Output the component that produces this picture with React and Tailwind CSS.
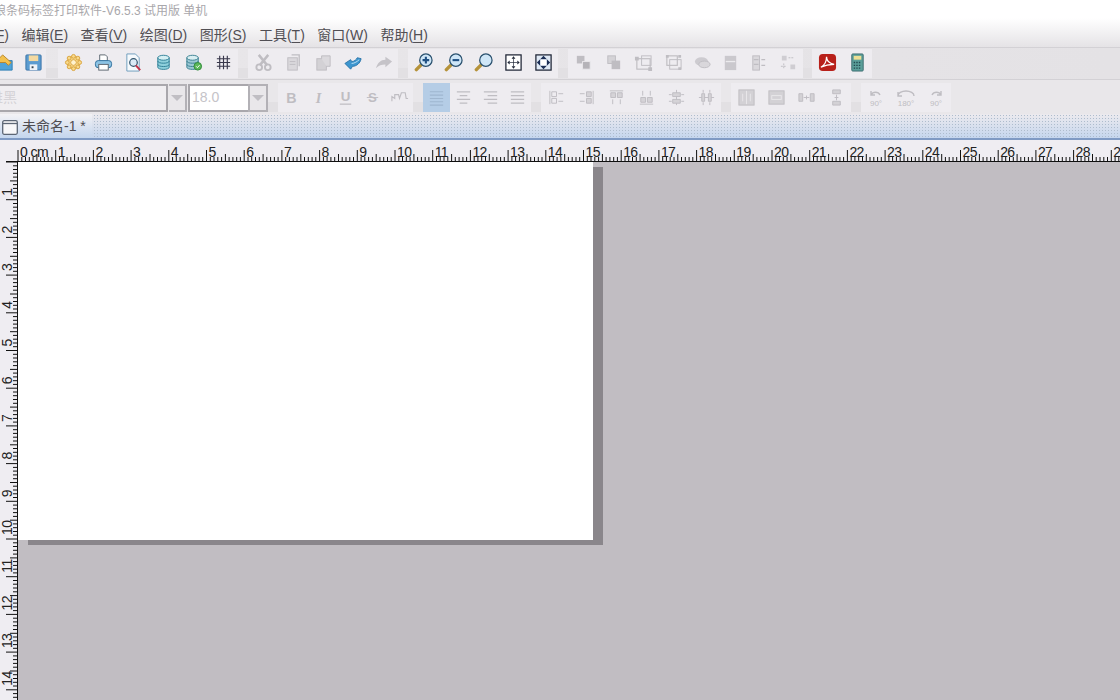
const CM = 37.7;
const GRAY = '#bfbdc2';

const Svg = ({ children, size = 19 }) => (
  <svg width={size} height={size} viewBox="0 0 20 20" fill="none">{children}</svg>
);

const glass = (
  <>
    <path d="M8 12l-5.500 5.500" stroke="#b5923a" strokeWidth="3.600" strokeLinecap="round" />
    <circle cx="12.500" cy="7.500" r="6.500" fill="#cfe6f7" stroke="#29506e" strokeWidth="1.300" />
  </>
);

// toolbar drawings
const icons = {
  open: <><path d="M1 18V8h16v10z" fill="#4fa3d8" stroke="#2f7fb5" /><path d="M0 9l7-7 9 8-3 3-3-3H4z" fill="#f2c14e" stroke="#b9862a" /></>,
  save: <><rect x="2" y="2" width="16" height="16" rx="1" fill="#5a9bd0" stroke="#3b74a8" /><rect x="5" y="2.500" width="10" height="6" fill="#f4d9a0" /><rect x="6" y="12" width="8" height="6" fill="#eef3f8" /><rect x="8" y="14" width="2" height="2" fill="#33424f" /></>,
  gear: <><circle cx="10" cy="10" r="6.500" fill="#f8d98a" stroke="#d9a441" strokeWidth="1.500" /><circle cx="10" cy="3.500" r="2" fill="#f8d98a" stroke="#d9a441" /><circle cx="10" cy="16.500" r="2" fill="#f8d98a" stroke="#d9a441" /><circle cx="3.500" cy="10" r="2" fill="#f8d98a" stroke="#d9a441" /><circle cx="16.500" cy="10" r="2" fill="#f8d98a" stroke="#d9a441" /><circle cx="5.400" cy="5.400" r="2" fill="#f8d98a" stroke="#d9a441" /><circle cx="14.600" cy="5.400" r="2" fill="#f8d98a" stroke="#d9a441" /><circle cx="5.400" cy="14.600" r="2" fill="#f8d98a" stroke="#d9a441" /><circle cx="14.600" cy="14.600" r="2" fill="#f8d98a" stroke="#d9a441" /><circle cx="10" cy="10" r="3" fill="#fff3cf" stroke="#d9a441" /></>,
  print: <><path d="M6 8V2h6l2 2v4" fill="#fff" stroke="#5c6670" /><rect x="1.500" y="8" width="17" height="7.500" rx="3" fill="#8cc3e4" stroke="#2f6f9c" /><rect x="5" y="12" width="10" height="6" fill="#fff" stroke="#5c6670" /></>,
  preview: <><path d="M3 1h9l4 4v14H3z" fill="#f5f9fc" stroke="#6f9dbd" /><circle cx="10" cy="10" r="4" fill="#dcebf6" stroke="#33566f" strokeWidth="1.300" /><path d="M12.500 13l4.500 5" stroke="#c2354a" strokeWidth="2.200" /></>,
  db: <><path d="M4 5v10c0 3 12 3 12 0V5z" fill="#8fd0dc" stroke="#2f8097" /><ellipse cx="10" cy="5" rx="6" ry="2.600" fill="#d4eff3" stroke="#2f8097" /><path d="M4 8.500c0 3 12 3 12 0M4 12c0 3 12 3 12 0" stroke="#2f8097" /></>,
  dbok: <><path d="M3 5v10c0 3 12 3 12 0V5z" fill="#9dc9d6" stroke="#3a7f91" /><ellipse cx="9" cy="5" rx="6" ry="2.600" fill="#d9eef2" stroke="#3a7f91" /><path d="M3 8.500c0 3 12 3 12 0M3 12c0 3 12 3 12 0" stroke="#3a7f91" /><circle cx="14.500" cy="14" r="4" fill="#5db85b" stroke="#2f8a3a" /><path d="M12.800 14l1.300 1.400 2.300-2.600" stroke="#fff" /></>,
  grid: <path d="M6 3v14M10 3v14M14 3v14M3 6h14M3 10h14M3 14h14" stroke="#37364a" strokeWidth="1.200" />,
  cut: <><path d="M5 2l9 11M15 2L6 13" stroke={GRAY} strokeWidth="2.600" /><circle cx="5.500" cy="15" r="3" stroke={GRAY} strokeWidth="2" /><circle cx="14.500" cy="15" r="3" stroke={GRAY} strokeWidth="2" /></>,
  copy: <><rect x="4" y="5" width="10" height="13" fill="#dad8dc" stroke={GRAY} /><path d="M8 2h8v12" stroke={GRAY} strokeWidth="1.400" /><path d="M6 9h6M6 12h6" stroke={GRAY} /></>,
  paste: <><rect x="3" y="6" width="10" height="12" fill="#d3d1d5" stroke={GRAY} /><path d="M8 6V3h9v11h-4" fill="#dbd9dd" stroke={GRAY} /></>,
  undo: <><path d="M1 11l6-4 1 2c3 0 5-2 6-4l4 1c-1 5-5 8-9 8l-2 3z" fill="#3d96cf" stroke="#2b75aa" /><path d="M8 11c3 0 6-2 8-4" stroke="#bfe0f3" /></>,
  redo: <path d="M19 9l-7-5v3c-5 0-8 3-10 9 3-3 6-4 10-4v3z" fill="#c5c3c8" />,
  zoomIn: <>{glass}<path d="M9 7.500h7M12.500 4v7" stroke="#1f4f82" strokeWidth="2.200" /></>,
  zoomOut: <>{glass}<path d="M9 7.500h7" stroke="#1f4f82" strokeWidth="2.200" /></>,
  zoomFit: glass,
  fit: <><rect x="2" y="2" width="16" height="16" fill="#fff" stroke="#1b2233" strokeWidth="1.300" /><path d="M10 3.500l-2 2.500h4zM10 16.500l-2-2.500h4zM3.500 10l2.500-2v4zM16.500 10l-2.500-2v4z" fill="#1b2233" /><path d="M10 6v8M6 10h8" stroke="#1b2233" strokeWidth=".7" /></>,
  fill: <><rect x="2" y="2" width="16" height="16" fill="#dfe9f5" stroke="#1b2233" strokeWidth="1.300" /><path d="M10 3l-3.500 3.500h7zM10 17l-3.500-3.500h7zM3 10l3.500-3.500v7zM17 10l-3.500-3.500v7z" fill="#1b2e55" /><rect x="7" y="7" width="6" height="6" fill="#fff" /></>,
  front: <><rect x="3" y="3" width="8" height="8" fill={GRAY} /><rect x="9" y="9" width="8" height="8" fill="#b5b3b8" stroke="#e9e7ea" /></>,
  back: <><rect x="4" y="3" width="8" height="8" fill="#d5d3d7" stroke={GRAY} /><rect x="8" y="8" width="9" height="9" fill={GRAY} /></>,
  group: <><rect x="3" y="6" width="14" height="11" stroke={GRAY} strokeWidth="1.200" /><rect x="8" y="3" width="10" height="10" stroke={GRAY} /><path d="M1 4h4v4H1zM15 15h4v4h-4z" fill={GRAY} /></>,
  ungroup: <><rect x="3" y="3" width="11" height="10" stroke={GRAY} strokeWidth="1.200" /><rect x="6" y="7" width="12" height="10" stroke={GRAY} /><path d="M2 2h3v3H2zM15 15h3v3h-3zM15 2h3v3h-3z" fill={GRAY} /></>,
  lock: <><ellipse cx="9" cy="9" rx="7" ry="4.500" fill="#cdcbd0" /><ellipse cx="12" cy="12" rx="6" ry="3.500" fill="#d9d7db" stroke={GRAY} /></>,
  page: <><rect x="4" y="3" width="12" height="15" fill="#cac8cd" /><path d="M5 9h10" stroke="#ecebee" strokeWidth="1.400" /></>,
  vbar: <><rect x="4" y="3" width="7" height="15" fill="#dad8dc" stroke={GRAY} /><path d="M5 7h5M5 12h5M13 7h4M13 13h4" stroke={GRAY} strokeWidth="1.400" /></>,
  nodes: <><path d="M3 3h5v5H3zM12 12h5v5h-5z" fill="#cfcdd2" /><path d="M10 5h6M5 11v5M2 14h6" stroke={GRAY} strokeDasharray="2 1" /></>,
  pdf: <><rect x="1" y="1" width="18" height="18" rx="4" fill="#b8201a" /><path d="M3 15c4-2 6-7 6-11 0 4 3 7 8 8-4 0-10 1-14 3z" stroke="#fff" strokeWidth="1.300" /></>,
  calc: <><rect x="4" y="1" width="12" height="18" rx="1" fill="#5b9f9a" stroke="#3c6d70" /><rect x="6" y="3" width="8" height="4" fill="#ecdf94" /><path d="M6 10h8M6 13h8M6 16h8" stroke="#234a50" strokeWidth="1.400" strokeDasharray="1.500 1.200" /></>,
  bold: <text x="10" y="15.500" textAnchor="middle" fontSize="15" fontWeight="700" fill={GRAY} fontFamily="Liberation Sans">B</text>,
  italic: <text x="10" y="15.500" textAnchor="middle" fontSize="15" fontWeight="700" fontStyle="italic" fill={GRAY} fontFamily="Liberation Serif">I</text>,
  under: <><text x="10" y="14" textAnchor="middle" fontSize="14" fontWeight="700" fill={GRAY} fontFamily="Liberation Sans">U</text><path d="M4 17h12" stroke={GRAY} strokeWidth="1.300" /></>,
  strike: <><text x="10" y="15" textAnchor="middle" fontSize="14" fontWeight="700" fill={GRAY} fontFamily="Liberation Sans">S</text><path d="M4 10h12" stroke={GRAY} /></>,
  wave: <path d="M2 14V9l3 2V7h4l1 4 2-6h4l1 6h2" stroke={GRAY} strokeWidth="1.200" />,
  left: <path d="M3 4h14M3 7.500h14M3 11h14M3 14.500h14M3 18h14" stroke="#9fb6cf" strokeWidth="1.200" />,
  center: <path d="M3 4h14M6 8h8M3 12h14M6 16h8" stroke={GRAY} strokeWidth="1.300" />,
  right: <path d="M3 4h14M7 8h10M3 12h14M7 16h10" stroke={GRAY} strokeWidth="1.300" />,
  just: <path d="M3 4h14M3 8h14M3 12h14M3 16h14" stroke={GRAY} strokeWidth="1.300" />,
  al: <><path d="M3 3v14" stroke={GRAY} /><path d="M5 4h5v5H5zM5 11h5v5H5z" stroke={GRAY} /><path d="M12 6h5M12 14h5" stroke={GRAY} /></>,
  ar: <><path d="M17 3v14" stroke={GRAY} /><path d="M10 4h5v5h-5zM10 11h5v5h-5z" fill="#d5d3d7" stroke={GRAY} /><path d="M3 6h5M3 14h5" stroke={GRAY} /></>,
  at: <><path d="M3 3h14" stroke={GRAY} /><path d="M4 5h5v5H4zM11 5h5v5h-5z" fill="#d5d3d7" stroke={GRAY} /><path d="M6 12v5M14 12v5" stroke={GRAY} /></>,
  ab: <><path d="M3 17h14" stroke={GRAY} /><path d="M4 10h5v5H4zM11 10h5v5h-5z" fill="#d5d3d7" stroke={GRAY} /><path d="M6 3v5M14 3v5" stroke={GRAY} /></>,
  am: <><path d="M10 2v16" stroke={GRAY} /><path d="M6 5h8v4H6zM6 12h8v4H6z" fill="#d5d3d7" stroke={GRAY} /><path d="M2 7h3M15 7h3M2 14h3M15 14h3" stroke={GRAY} /></>,
  ac: <><path d="M2 10h16" stroke={GRAY} /><path d="M5 6h3v8H5zM12 6h3v8h-3z" fill="#d5d3d7" stroke={GRAY} /><path d="M6.500 2v3M13.500 2v3M6.500 15v3M13.500 15v3" stroke={GRAY} /></>,
  sameW: <><rect x="2" y="2" width="16" height="16" fill="#d3d1d5" stroke={GRAY} /><path d="M10 3v14M6 6v8M14 6v8" stroke="#e9e7ea" /></>,
  sameH: <><rect x="2" y="3" width="16" height="14" fill="#d3d1d5" stroke={GRAY} /><rect x="5" y="8" width="10" height="4" stroke="#e9e7ea" /></>,
  spreadH: <><path d="M2 6h4v8H2zM14 6h4v8h-4z" fill="#d3d1d5" stroke={GRAY} /><path d="M7 10h6M10 8v4" stroke={GRAY} /></>,
  spreadV: <><path d="M6 2h8v4H6zM6 14h8v4H6z" fill="#d3d1d5" stroke={GRAY} /><path d="M10 7v6M8 10h4" stroke={GRAY} /></>,
};

const Rotate = ({ label, arc }) => (
  <svg width="22" height="22" viewBox="0 0 22 22" fill="none">
    <path d={arc} stroke={GRAY} strokeWidth="1.400" />
    <text x="11" y="19" textAnchor="middle" fontSize="8" fill={GRAY} fontFamily="Liberation Sans">{label}</text>
  </svg>
);

const Btn = ({ name, className = 'w-[30px]' }) => (
  <div className={`flex shrink-0 items-center justify-center ${className}`}>
    <Svg>{icons[name]}</Svg>
  </div>
);

const Group = ({ children, className = '' }) => (
  <div className={`flex h-full items-center bg-[#eeecf0] ${className}`}>{children}</div>
);

const Gripper = ({ w = 'w-[10px]' }) => (
  <div className={`flex h-full ${w} shrink-0 flex-col justify-end`}>
    <div className="h-[10px] bg-[#e2e0e3]" />
  </div>
);

const menus = [
  ['文件', 'F'], ['编辑', 'E'], ['查看', 'V'], ['绘图', 'D'],
  ['图形', 'S'], ['工具', 'T'], ['窗口', 'W'], ['帮助', 'H'],
];

const RulerTop = () => {
  const ticks = [];
  for (let i = 0; i < 300; i++) {
    const x = 18 + i * (CM / 10);
    if (x > 1120) break;
    const top = i % 10 === 0 ? 10 : i % 5 === 0 ? 14 : 17;
    ticks.push(<path key={i} d={`M${x.toFixed(1)} 21.500V${top}`} stroke="#111" strokeWidth="1" />);
  }
  const labels = [];
  for (let n = 0; n <= 29; n++) {
    labels.push(
      <text key={n} x={18 + n * CM + 2} y="17" fontSize="14" fill="#222" letterSpacing="-0.6" fontFamily="Liberation Sans">
        {n === 0 ? '0 cm' : n}
      </text>
    );
  }
  return (
    <svg className="block h-[22px] w-full" viewBox="0 0 1120 22">
      <path d="M6 21.500H1120" stroke="#111" strokeWidth="1" />
      {ticks}
      {labels}
    </svg>
  );
};

const RulerLeft = () => {
  const ticks = [];
  for (let i = 0; i < 143; i++) {
    const y = i * (CM / 10);
    const left = i % 10 === 0 ? 6 : i % 5 === 0 ? 10 : 13;
    ticks.push(<path key={i} d={`M17.500 ${y.toFixed(1)}H${left}`} stroke="#111" strokeWidth="1" />);
  }
  const labels = [];
  for (let n = 1; n <= 14; n++) {
    const y = n * CM - 4;
    labels.push(
      <text key={n} x="12" y={y} transform={`rotate(-90 12 ${y})`} fontSize="14" fill="#222" letterSpacing="-0.6" fontFamily="Liberation Sans">
        {n}
      </text>
    );
  }
  return (
    <svg className="block h-[538px] w-[18px] shrink-0" viewBox="0 0 18 538">
      <path d="M17.500 0V538" stroke="#111" strokeWidth="1" />
      {ticks}
      {labels}
    </svg>
  );
};

export default function App() {
  const cjk = { fontFamily: '"Liberation Sans", "Noto Sans CJK SC", sans-serif' };
  const t1 = 'w-[30px] pb-[2px]';
  const t2 = 'w-[27px]';

  return (
    <div className="flex h-[700px] w-[1120px] flex-col overflow-hidden bg-white" style={cjk}>
      {/* title */}
      <div className="h-[18px] shrink-0 overflow-hidden bg-white text-[12px] leading-[23px] whitespace-nowrap text-[#a9a7ab]">
        <span className="-ml-[6px] inline-block">琅条码标签打印软件-V6.5.3 试用版 单机</span>
      </div>

      {/* menu */}
      <div className="flex h-[29px] shrink-0 items-center gap-[12.5px] bg-gradient-to-b from-white to-[#e5e3e6] pt-[5px] text-[14px] whitespace-nowrap text-[#514f54]">
        {menus.map(([t, k], i) => (
          <span key={k} className={i === 0 ? '-ml-[37px]' : ''}>
            {t}(<span className="underline underline-offset-2">{k}</span>)
          </span>
        ))}
      </div>

      {/* toolbar 1 */}
      <div className="flex h-[33px] shrink-0 items-center border-y border-[#d3d1d5] bg-gradient-to-r from-[#e9e7ea] to-[#e4e2e5] py-px">
        <Group className="-ml-[10px]">
          <Btn name="open" className={t1} />
          <Btn name="save" className="w-[26px] pb-[2px]" />
        </Group>
        <Gripper w="w-[12px]" />
        <Group>
          {['gear', 'print', 'preview', 'db', 'dbok', 'grid'].map((n) => <Btn key={n} name={n} className={t1} />)}
        </Group>
        <Gripper />
        <Group>
          {['cut', 'copy', 'paste', 'undo', 'redo'].map((n) => <Btn key={n} name={n} className={t1} />)}
        </Group>
        <Gripper />
        <Group>
          {['zoomIn', 'zoomOut', 'zoomFit', 'fit', 'fill'].map((n) => <Btn key={n} name={n} className={t1} />)}
        </Group>
        <Gripper />
        <Group>
          {['front', 'back', 'group', 'ungroup'].map((n) => <Btn key={n} name={n} className={t1} />)}
          <Btn name="lock" className="w-[28px] pb-[2px]" />
          <Btn name="page" className="w-[28px] pb-[2px]" />
          <Btn name="vbar" className="w-[29px] pb-[2px]" />
          <Btn name="nodes" className={t1} />
        </Group>
        <Gripper w="w-[9px]" />
        <Group>
          <Btn name="pdf" className={t1} /><Btn name="calc" className={t1} />
        </Group>
      </div>

      {/* toolbar 2 */}
      <div className="flex h-[34px] shrink-0 items-center bg-[#e9e7ea] pt-[3px] pb-[2px]">
        <div className="flex h-[28px] w-[168px] shrink-0 items-center overflow-hidden border-y-2 border-r-2 border-[#a9a7ac] bg-[#f0eef1] text-[14px] whitespace-nowrap text-[#d5d3d7]">
          <span className="-ml-[11px]">雅黑</span>
        </div>
        <div className="ml-[1px] flex h-[28px] w-[18px] shrink-0 items-center justify-center border-y-2 border-r-2 border-[#b3b1b6] bg-[#e9e7ea]">
          <div className="h-0 w-0 border-x-[6px] border-t-[6px] border-x-transparent border-t-[#c0bec3]" />
        </div>
        <div className="ml-[1px] flex h-[28px] w-[60px] shrink-0 items-center border-y-2 border-l-2 border-[#a9a7ac] bg-white pl-[2px] text-[14px] text-[#c5c3c8]">18.0</div>
        <div className="flex h-[28px] w-[20px] shrink-0 items-center justify-center border-2 border-[#b3b1b6] bg-[#e9e7ea]">
          <div className="h-0 w-0 border-x-[6px] border-t-[6px] border-x-transparent border-t-[#c0bec3]" />
        </div>
        <Gripper w="w-[10px]" />
        <Group>
          {['bold', 'italic', 'under', 'strike', 'wave'].map((n) => <Btn key={n} name={n} className={t2} />)}
        </Group>
        <Gripper w="w-[10px]" />
        <Group>
          <Btn name="left" className="h-full w-[27px] bg-[#b5cde6]" />
          {['center', 'right', 'just'].map((n) => <Btn key={n} name={n} className={t2} />)}
        </Group>
        <Gripper />
        <Group>
          {['al', 'ar', 'at', 'ab', 'am', 'ac'].map((n) => <Btn key={n} name={n} />)}
        </Group>
        <Gripper />
        <Group>
          {['sameW', 'sameH', 'spreadH', 'spreadV'].map((n) => <Btn key={n} name={n} />)}
        </Group>
        <Gripper />
        <Group>
          <div className="flex w-[30px] justify-center"><Rotate label="90°" arc="M6 8a5 5 0 0 1 9 0M6 4v4h4" /></div>
          <div className="flex w-[30px] justify-center"><Rotate label="180°" arc="M3 9a8 5 0 0 1 16 0M3 5v4h4" /></div>
          <div className="flex w-[30px] justify-center"><Rotate label="90°" arc="M7 8a5 5 0 0 1 9 0M16 4v4h-4" /></div>
        </Group>
      </div>

      {/* tabs */}
      <div className="flex h-[26px] shrink-0 border-b-2 border-[#7f9ac4] bg-[radial-gradient(#aebccd_0.7px,transparent_0.8px),linear-gradient(to_bottom,#eceaee,#c5d6ee)] bg-[length:3px_3px,100%_100%]">
        <div className="flex h-full w-[92px] items-center gap-[4px] bg-gradient-to-b from-[#f3f2f5] to-[#c4d6ee] pt-[1px] pl-[2px] text-[14px] whitespace-nowrap text-[#4f4d52]">
          <svg width="16" height="16" viewBox="0 0 16 16" fill="none">
            <rect x="0.700" y="1.700" width="14.600" height="13.600" rx="1.500" fill="#f7f7f9" stroke="#5c6675" strokeWidth="1.300" />
            <path d="M1 4.500h14" stroke="#5c6675" strokeWidth="1.300" />
          </svg>
          未命名-1 *
        </div>
      </div>

      {/* ruler */}
      <div className="h-[22px] shrink-0 bg-[#efedf2]">
        <RulerTop />
      </div>

      {/* work area */}
      <div className="flex min-h-0 flex-1">
        <div className="w-[18px] shrink-0 bg-[#efedf2]">
          <RulerLeft />
        </div>
        <div className="flex-1 bg-[#c1bdc2]">
          <div className="h-[378px] w-[575px] bg-white shadow-[10px_5px_0_#8a868b]" />
        </div>
      </div>
    </div>
  );
}
